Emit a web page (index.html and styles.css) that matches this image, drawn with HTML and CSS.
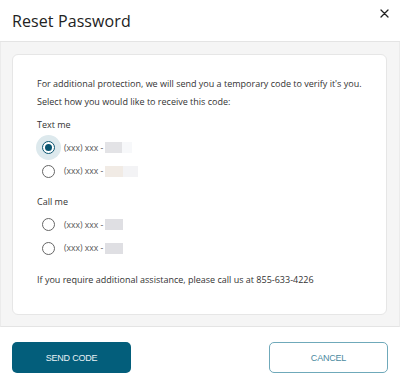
FILE: index.html
```html
<!DOCTYPE html>
<html>
<head>
<meta charset="utf-8">
<link rel="stylesheet" href="styles.css">
</head>
<body>
<div class="dialog">
  <div class="header">
    <h1 class="title">Reset Password</h1>
    <button class="close" aria-label="Close">
      <svg width="9" height="9" viewBox="0 0 9 9"><path d="M1 1L8 8M8 1L1 8" stroke="#222" stroke-width="1.3" stroke-linecap="round"/></svg>
    </button>
  </div>
  <div class="body">
    <div class="card">
      <p class="intro">For additional protection, we will send you a temporary code to verify it's you.</p>
      <p class="intro">Select how you would like to receive this code:</p>
      <div class="group first">
        <div class="group-label">Text me</div>
        <label class="option">
          <span class="radio checked"><span class="dot"></span></span>
          <span class="opt-text">(xxx) xxx -</span><span class="mask m1"></span><span class="mask m1b"></span>
        </label>
        <label class="option">
          <span class="radio"></span>
          <span class="opt-text">(xxx) xxx -</span><span class="mask m2"></span><span class="mask m2b"></span>
        </label>
      </div>
      <div class="group">
        <div class="group-label">Call me</div>
        <label class="option">
          <span class="radio"></span>
          <span class="opt-text">(xxx) xxx -</span><span class="mask m3"></span>
        </label>
        <label class="option">
          <span class="radio"></span>
          <span class="opt-text">(xxx) xxx -</span><span class="mask m3"></span>
        </label>
      </div>
      <p class="help">If you require additional assistance, please call us at 855-633-4226</p>
    </div>
  </div>
  <div class="footer">
    <button class="btn primary">SEND CODE</button>
    <button class="btn secondary">CANCEL</button>
  </div>
</div>
</body>
</html>
```

FILE: styles.css
```css
* { box-sizing: border-box; }
html, body { margin: 0; padding: 0; background: #fff; }
body {
  font-family: "Open Sans", "DejaVu Sans", sans-serif;
  color: #333;
  width: 400px;
  height: 388px;
  overflow: hidden;
}
.dialog {
  width: 400px;
  height: 388px;
  display: flex;
  flex-direction: column;
  background: #fff;
}
.header {
  height: 42px;
  display: flex;
  align-items: flex-start;
  justify-content: space-between;
  padding: 0 11px 0 12px;
  border-bottom: 1px solid #e4e4e4;
}
.title {
  margin: 10px 0 0;
  font-size: 16px;
  font-weight: 500;
  color: #222;
  letter-spacing: 0.1px;
}
.close {
  border: 0;
  background: none;
  padding: 0;
  margin-top: 9px;
  width: 9px;
  height: 9px;
  display: flex;
}
.body {
  background: #f5f5f5;
  border-left: 1px solid #ebebeb;
  border-right: 1px solid #ebebeb;
  border-bottom: 1px solid #e4e4e4;
  padding: 12px 12px 11px 11px;
  height: 285px;
}
.card {
  background: #fff;
  border: 1px solid #e6e6e6;
  border-radius: 6px;
  height: 100%;
  padding: 23px 24px 0 24px;
}
.intro {
  margin: 0 0 7px;
  font-size: 9px;
  line-height: 11px;
  color: #333;
}
.group { margin-top: 13px; }
.group.first { margin-top: 12px; }
.group-label {
  font-size: 9px;
  line-height: 11px;
  margin-bottom: 6px;
}
.option {
  display: flex;
  align-items: center;
  height: 23.5px;
  padding-left: 5px;
}
.radio {
  position: relative;
  width: 13px;
  height: 13px;
  border: 1.3px solid #666;
  border-radius: 50%;
  margin-right: 9px;
  flex: none;
  display: flex;
  align-items: center;
  justify-content: center;
  background: #fff;
}
.radio.checked {
  border-color: #0a5570;
  box-shadow: 0 0 0 6px #dde9ed;
}
.dot {
  width: 7px;
  height: 7px;
  border-radius: 50%;
  background: #0a5570;
}
.opt-text {
  font-size: 8.6px;
  color: #555;
}
.mask {
  display: inline-block;
  height: 11px;
  margin-left: 2px;
  background: #e4e4e6;
}
.m1 { width: 17px; background: #e3e3e6; }
.m1b { width: 10px; margin-left: 0; background: #f7f8fa; }
.m2 { width: 18px; background: #f1ebe5; }
.m2b { width: 15px; margin-left: 0; background: #f3f3f5; }
.m3 { width: 18px; background: #dfdfe3; }
.help {
  margin: 14px 0 0;
  font-size: 9px;
  line-height: 11px;
}
.footer {
  flex: 1;
  display: flex;
  justify-content: space-between;
  align-items: flex-start;
  padding: 15px 12px 0 12px;
}
.btn {
  width: 119px;
  height: 31px;
  border-radius: 5px;
  font-family: "Liberation Sans", Arial, sans-serif;
  font-size: 9px;
  letter-spacing: -0.2px;
}
.primary {
  background: #035e7b;
  color: #e8f1f4;
  border: 0;
}
.secondary {
  background: #fff;
  color: #4a8aa0;
  border: 1.5px solid #6fa9ba;
}
```
